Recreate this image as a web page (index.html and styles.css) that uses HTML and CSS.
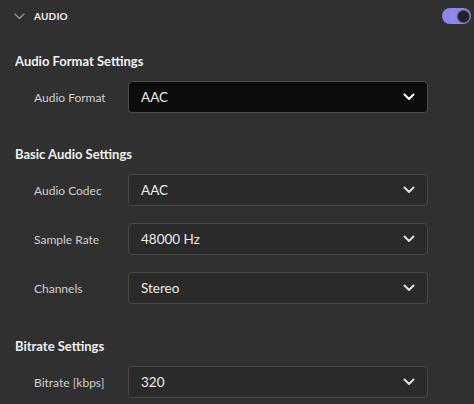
FILE: index.html
```html
<!DOCTYPE html>
<html lang="en">
<head>
    <meta charset="UTF-8">
    <meta name="viewport" content="width=device-width, initial-scale=1.0">
    <title>Audio</title>
    <link rel="stylesheet" href="styles.css">
</head>
<body>
    <div class="panel">
        <div class="panel-header">
            <svg class="caret" width="11" height="7" viewBox="0 0 11 7">
                <path d="M1 1l4.5 4.5L10 1" fill="none" stroke="#8a8a8a" stroke-width="1.6" stroke-linecap="round" stroke-linejoin="round"/>
            </svg>
            <span class="panel-title">AUDIO</span>
            <span class="toggle"><span class="knob"></span></span>
        </div>

        <div class="group">
            <h2>Audio Format Settings</h2>
            <div class="row">
                <label>Audio Format</label>
                <div class="select select-active">
                    <span>AAC</span>
                    <svg class="chev" width="12" height="8" viewBox="0 0 12 8"><path d="M1.5 1.5L6 6l4.5-4.5" fill="none" stroke="#fff" stroke-width="2" stroke-linecap="round" stroke-linejoin="round"/></svg>
                </div>
            </div>
        </div>

        <div class="group">
            <h2>Basic Audio Settings</h2>
            <div class="row">
                <label>Audio Codec</label>
                <div class="select">
                    <span>AAC</span>
                    <svg class="chev" width="12" height="8" viewBox="0 0 12 8"><path d="M1.5 1.5L6 6l4.5-4.5" fill="none" stroke="#ddd" stroke-width="2" stroke-linecap="round" stroke-linejoin="round"/></svg>
                </div>
            </div>
            <div class="row">
                <label>Sample Rate</label>
                <div class="select">
                    <span>48000 Hz</span>
                    <svg class="chev" width="12" height="8" viewBox="0 0 12 8"><path d="M1.5 1.5L6 6l4.5-4.5" fill="none" stroke="#ddd" stroke-width="2" stroke-linecap="round" stroke-linejoin="round"/></svg>
                </div>
            </div>
            <div class="row">
                <label>Channels</label>
                <div class="select">
                    <span>Stereo</span>
                    <svg class="chev" width="12" height="8" viewBox="0 0 12 8"><path d="M1.5 1.5L6 6l4.5-4.5" fill="none" stroke="#ddd" stroke-width="2" stroke-linecap="round" stroke-linejoin="round"/></svg>
                </div>
            </div>
        </div>

        <div class="group">
            <h2>Bitrate Settings</h2>
            <div class="row">
                <label>Bitrate [kbps]</label>
                <div class="select">
                    <span>320</span>
                    <svg class="chev" width="12" height="8" viewBox="0 0 12 8"><path d="M1.5 1.5L6 6l4.5-4.5" fill="none" stroke="#ddd" stroke-width="2" stroke-linecap="round" stroke-linejoin="round"/></svg>
                </div>
            </div>
        </div>
    </div>
</body>
</html>
```

FILE: styles.css
```css
body {
    margin: 0;
    background: #303030;
    font-family: Lato, 'Noto Sans', sans-serif;
    color: #d6d6d6;
}
.panel {
    height: 404px;
    overflow: hidden;
}
.panel-header {
    display: flex;
    align-items: center;
    height: 32px;
    padding: 0 3px 0 14px;
}
.caret {
    margin-right: 9px;
}
.panel-title {
    font-size: 10px;
    font-weight: 700;
    color: #f2f2f2;
    letter-spacing: 0.2px;
}
.toggle {
    margin-left: auto;
    width: 29px;
    height: 16px;
    border-radius: 8px;
    background: #8d86e8;
    display: flex;
    align-items: center;
    justify-content: flex-end;
    padding-right: 2px;
    box-sizing: border-box;
}
.knob {
    width: 11px;
    height: 11px;
    border-radius: 50%;
    background: #232323;
    box-shadow: 0 0 0 1px #4a4a5a;
}
.group {
    padding: 19px 46px 0 15px;
}
.group + .group {
    padding-top: 31px;
}
.group:last-child {
    padding-top: 32px;
}
h2 {
    margin: 0 0 10px;
    font-size: 13px;
    line-height: 20px;
    font-weight: 700;
    color: #f0f0f0;
}
.row {
    display: flex;
    align-items: center;
    padding-left: 19px;
}
.row + .row {
    margin-top: 17px;
}
label {
    width: 94px;
    flex: none;
    font-size: 12px;
    color: #cfcfcf;
}
.select {
    flex: 1;
    height: 32px;
    box-sizing: border-box;
    border: 1px solid #474747;
    border-radius: 4px;
    background: #2a2a2a;
    display: flex;
    align-items: center;
    justify-content: space-between;
    padding: 0 12px 0 12px;
    font-size: 13.5px;
    color: #ececec;
}
.select-active {
    background: #0c0c0c;
    border-color: #4d4d4d;
}
.chev {
    display: block;
}
```
